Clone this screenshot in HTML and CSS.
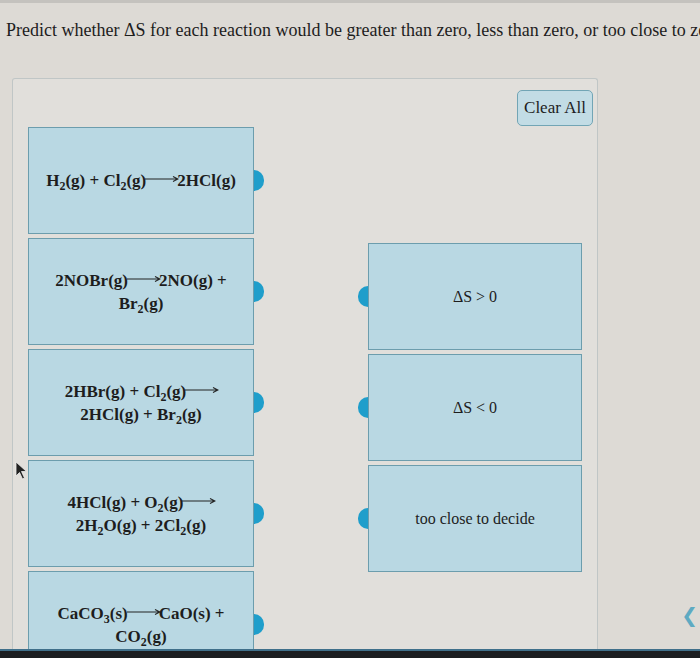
FILE: index.html
```html
<!DOCTYPE html>
<html lang="en">
<head>
    <meta charset="UTF-8">
    <meta name="viewport" content="width=device-width, initial-scale=1.0">
    <title>Entropy sort</title>
    <link rel="stylesheet" href="styles.css">
</head>
<body>
<div class="title">Predict whether &Delta;S for each reaction would be greater than zero, less than zero, or too close to zero.</div>
<div class="main">
    <div class="panel">
        <div class="toolbar">
            <button class="clear-btn">Clear All</button>
        </div>
        <div class="board">
            <div class="column">
                <div class="card item">
                    <div>H<sub>2</sub>(g) + Cl<sub>2</sub>(g)<svg class="arrow" width="34" height="8" viewBox="0 0 34 8"><path d="M0 4H32M28 1.5L33 4L28 6.5"/></svg>2HCl(g)</div>
                </div>
                <div class="card item">
                    <div>2NOBr(g)<svg class="arrow" width="34" height="8" viewBox="0 0 34 8"><path d="M0 4H32M28 1.5L33 4L28 6.5"/></svg>2NO(g) +<br>Br<sub>2</sub>(g)</div>
                </div>
                <div class="card item">
                    <div>2HBr(g) + Cl<sub>2</sub>(g)<svg class="arrow" width="34" height="8" viewBox="0 0 34 8"><path d="M0 4H32M28 1.5L33 4L28 6.5"/></svg><br>2HCl(g) + Br<sub>2</sub>(g)</div>
                </div>
                <div class="card item">
                    <div>4HCl(g) + O<sub>2</sub>(g)<svg class="arrow" width="34" height="8" viewBox="0 0 34 8"><path d="M0 4H32M28 1.5L33 4L28 6.5"/></svg><br>2H<sub>2</sub>O(g) + 2Cl<sub>2</sub>(g)</div>
                </div>
                <div class="card item">
                    <div>CaCO<sub>3</sub>(s)<svg class="arrow" width="34" height="8" viewBox="0 0 34 8"><path d="M0 4H32M28 1.5L33 4L28 6.5"/></svg>CaO(s) +<br>CO<sub>2</sub>(g)</div>
                </div>
            </div>
            <div class="column targets">
                <div class="card target">&Delta;S &gt; 0</div>
                <div class="card target">&Delta;S &lt; 0</div>
                <div class="card target">too close to decide</div>
            </div>
        </div>
        <svg class="pointer" width="14" height="20" viewBox="0 0 14 20"><path d="M1 1L1 15L4.5 11.5L7.5 18L9.5 17L6.5 10.5L11.5 10.5Z"/></svg>
    </div>
    <div class="aside">
        <span class="nav-prev">&#10094;</span>
    </div>
</div>
<div class="bezel"></div>
</body>
</html>
```

FILE: styles.css
```css
body {
    margin: 0;
    height: 100vh;
    display: flex;
    flex-direction: column;
    overflow: hidden;
    background-color: #dddad5;
    font-family: "Liberation Serif", "Times New Roman", serif;
    color: #1d1d1d;
}
.title {
    border-top: 3px solid #c4c2be;
    padding: 17px 0 0 6px;
    height: 57px;
    box-sizing: border-box;
    font-size: 18px;
    line-height: 21px;
    white-space: nowrap;
    overflow: hidden;
}
.main {
    flex: 1;
    display: flex;
    margin-top: 21px;
    min-height: 0;
}
.panel {
    position: relative;
    width: 586px;
    margin-left: 12px;
    box-sizing: border-box;
    padding: 11px 4px 0 15px;
    border: 1px solid #c0c6c6;
    border-bottom: none;
    border-radius: 3px 3px 0 0;
    background-color: #e1dfdb;
    overflow: hidden;
}
.toolbar {
    display: flex;
    justify-content: flex-end;
    margin-bottom: 1px;
}
.clear-btn {
    width: 76px;
    height: 36px;
    padding: 0;
    background-color: #c2dce5;
    border: 1px solid #72a5b5;
    border-radius: 5px;
    font-family: "Liberation Serif", "Times New Roman", serif;
    font-size: 17px;
    color: #1d1d1d;
}
.board {
    display: grid;
    grid-template-columns: 226px 214px;
    column-gap: 114px;
}
.column {
    display: flex;
    flex-direction: column;
    gap: 4px;
}
.targets {
    margin-top: 116px;
}
.card {
    position: relative;
    height: 107px;
    box-sizing: border-box;
    background-color: #b9d8e3;
    border: 1px solid #6c9dad;
    display: flex;
    align-items: center;
    justify-content: center;
    text-align: center;
}
.item {
    font-size: 17px;
    font-weight: bold;
    line-height: 23px;
}
.item sub {
    font-size: 12px;
    line-height: 0;
}
.target {
    font-size: 16px;
}
.item::after, .target::before {
    content: "";
    position: absolute;
    top: 50%;
    width: 10px;
    height: 21px;
    margin-top: -11px;
    background-color: #1f9ecb;
}
.item::after {
    right: -11px;
    border-radius: 0 11px 11px 0;
}
.target::before {
    left: -11px;
    border-radius: 11px 0 0 11px;
}
.arrow {
    vertical-align: 3px;
    margin: 0 -2px 0 -1px;
}
.arrow path {
    fill: none;
    stroke: #222;
    stroke-width: 1.1;
}
.pointer {
    position: absolute;
    left: 2px;
    top: 382px;
}
.pointer path {
    fill: #222;
    stroke: #eee;
    stroke-width: 0.8;
}
.aside {
    flex: 1;
    display: flex;
    align-items: flex-end;
    justify-content: flex-end;
    padding-bottom: 22px;
}
.nav-prev {
    font-family: "DejaVu Sans", sans-serif;
    font-size: 20px;
    color: #5eaac2;
    margin-right: 2px;
}
.bezel {
    height: 7px;
    border-top: 2px solid #3f6f8a;
    background-color: #1b1d20;
}
```
